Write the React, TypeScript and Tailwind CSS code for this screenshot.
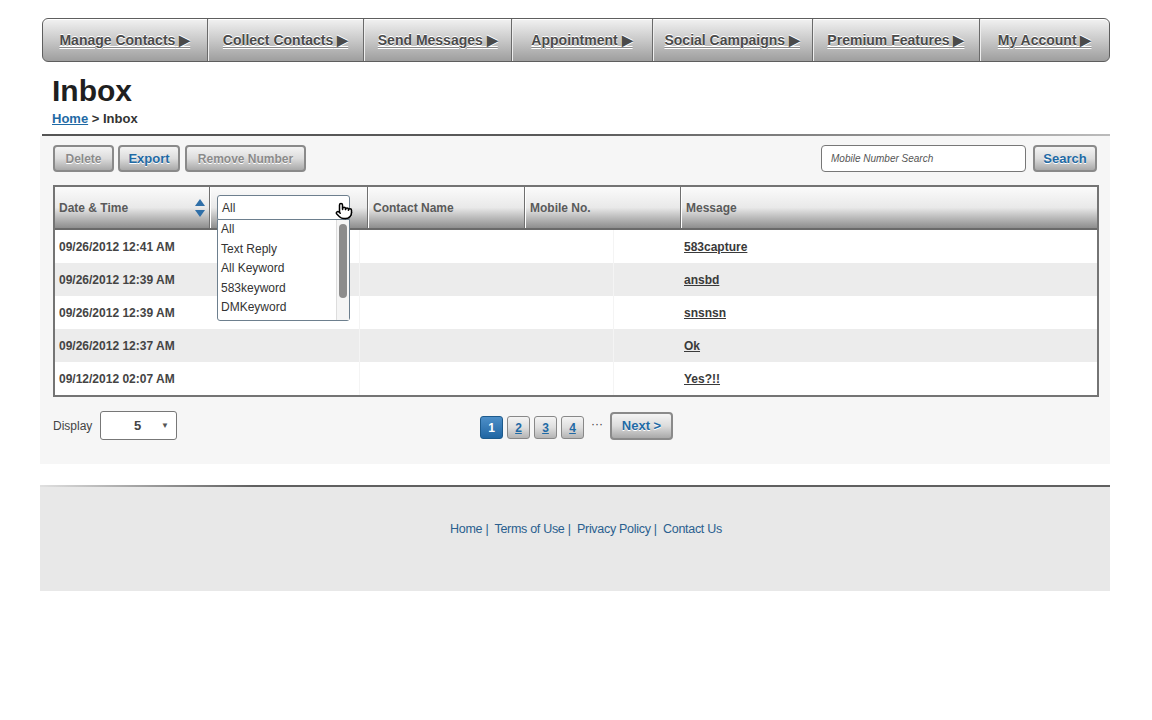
import { Pointer } from "lucide-react";

const navItems = [
  { label: "Manage Contacts", w: "w-[165px]" },
  { label: "Collect Contacts", w: "w-[157px]" },
  { label: "Send Messages", w: "w-[148px]" },
  { label: "Appointment", w: "w-[141px]" },
  { label: "Social Campaigns", w: "w-[160px]" },
  { label: "Premium Features", w: "w-[168px]" },
  { label: "My Account", w: "w-[129px]" },
];

const rows = [
  { date: "09/26/2012 12:41 AM", msg: "583capture" },
  { date: "09/26/2012 12:39 AM", msg: "ansbd" },
  { date: "09/26/2012 12:39 AM", msg: "snsnsn" },
  { date: "09/26/2012 12:37 AM", msg: "Ok" },
  { date: "09/12/2012 02:07 AM", msg: "Yes?!!" },
];

const options = ["All", "Text Reply", "All Keyword", "583keyword", "DMKeyword"];

// shared grey bevel button look
const btn =
  "h-[27px] rounded-[4px] border-2 border-[#8a8a8a] bg-gradient-to-b from-[#f4f4f4] via-[#dcdcdc] to-[#a9a9a9] text-[12px] font-bold [text-shadow:0_1px_0_#fff] flex items-center justify-center";

function HeaderCell({ label, w }: { label: string; w: string }) {
  return (
    <div
      className={`${w} h-full flex items-center px-[5px] border-r border-[#6f6f6f] shadow-[inset_1px_0_0_#fff] text-[12px] font-bold text-[#5a5a5a]`}
    >
      {label}
    </div>
  );
}

export default function App() {
  return (
    <div className="w-[1152px] h-[720px] bg-white font-['Liberation_Sans',Arial,sans-serif] text-[#444]">
      <div className="ml-[40px] w-[1070px] pt-[18px]">
        {/* Top navigation */}
        <div className="ml-[2px] w-[1068px] h-[44px] flex rounded-[6px] border border-[#5e5e5e] overflow-hidden bg-gradient-to-b from-[#f2f2f2] via-[#c9c9c9] to-[#9e9e9e] shadow-[inset_0_1px_0_#fff]">
          {navItems.map((n, i) => (
            <div
              key={n.label}
              className={`${n.w} h-full flex items-center justify-center text-[14px] font-bold text-[#4a4a4a] underline decoration-[#8a8a8a] underline-offset-2 [text-shadow:0_1px_0_#fff,0_-1px_0_#fff] ${i < navItems.length - 1 ? "border-r border-[#6a6a6a] shadow-[1px_0_0_#eee]" : ""}`}
            >
              {n.label} ▶
            </div>
          ))}
        </div>

        {/* Title */}
        <div className="pl-[12px] pt-[13px] h-[72px]">
          <div className="text-[30px] leading-[32px] font-bold text-[#1f1f1f]">Inbox</div>
          <div className="mt-[4px] text-[13px] leading-[16px] font-bold text-[#333]">
            <span className="text-[#1f6aa5] underline">Home</span> &gt; Inbox
          </div>
        </div>
        <div className="ml-[2px] h-[2px] bg-gradient-to-r from-[#555] via-[#5a5a5a] to-[#bbb]" />

        {/* Content panel */}
        <div className="bg-[#f6f6f6] h-[328px] pt-[9px] px-[13px]">
          <div className="flex items-center h-[27px]">
            <div className={`${btn} w-[61px] text-[#8a8a8a]`}>Delete</div>
            <div className={`${btn} w-[62px] ml-[4px] text-[#1f6aa5] text-[13px]`}>Export</div>
            <div className={`${btn} w-[121px] ml-[5px] text-[#8a8a8a]`}>Remove Number</div>
            <div className="ml-auto w-[205px] h-[27px] bg-white rounded-[4px] border border-[#777] flex items-center px-[9px] text-[10px] italic text-[#555]">
              Mobile Number Search
            </div>
            <div className={`${btn} w-[64px] ml-[7px] text-[#1f6aa5] text-[13px]`}>Search</div>
          </div>

          {/* Table */}
          <div className="mt-[13px] w-[1046px] border-2 border-[#747474] bg-white relative">
            <div className="h-[43px] flex border-b-2 border-[#6a6a6a] bg-gradient-to-b from-[#fbfbfb] via-[#e9e9e9] to-[#8e8e8e]">
              <div className="w-[155px] h-full flex items-center pl-[4px] pr-[4px] border-r border-[#6f6f6f] text-[12px] font-bold text-[#5a5a5a]">
                <span>Date &amp; Time</span>
                <div className="ml-auto flex flex-col gap-[4px] items-center">
                  <div className="w-0 h-0 border-l-[5px] border-r-[5px] border-b-[7px] border-l-transparent border-r-transparent border-b-[#2f6fa8]" />
                  <div className="w-0 h-0 border-l-[5px] border-r-[5px] border-t-[7px] border-l-transparent border-r-transparent border-t-[#2f6fa8]" />
                </div>
              </div>
              <div className="w-[158px] h-full flex items-center px-[7px] border-r border-[#6f6f6f] shadow-[inset_1px_0_0_#fff]">
                <div className="w-[133px] h-[26px] bg-white border border-[#6d7f8e] rounded-[3px] flex items-center px-[4px] text-[12px] text-[#333]">
                  All
                </div>
              </div>
              <HeaderCell label="Contact Name" w="w-[157px]" />
              <HeaderCell label="Mobile No." w="w-[156px]" />
              <div className="flex-1 h-full flex items-center px-[5px] shadow-[inset_1px_0_0_#fff] text-[12px] font-bold text-[#5a5a5a]">
                Message
              </div>
            </div>

            {rows.map((r, i) => (
              <div
                key={i}
                className={`h-[33px] flex items-center text-[12px] font-bold text-[#444] ${i % 2 === 1 ? "bg-[#ececec]" : "bg-white"}`}
              >
                <div className="w-[304px] pl-[4px]">{r.date}</div>
                <div className="w-[254px] h-full border-l border-[#f4f4f4]" />
                <div className="w-[68px] h-full border-l border-[#f4f4f4]" />
                <div className="pl-[3px] underline text-[#3a3a3a]">{r.msg}</div>
              </div>
            ))}

            {/* open filter list */}
            <div className="absolute left-[162px] top-[32px] w-[133px] h-[102px] bg-white border border-[#6d7f8e] rounded-b-[3px] flex">
              <div className="flex-1 pl-[3px] text-[12px] leading-[19.5px] text-[#333]">
                {options.map((o) => (
                  <div key={o}>{o}</div>
                ))}
              </div>
              <div className="w-[13px] border-l border-[#ddd] bg-[#f5f5f5] pt-[4px] flex justify-center">
                <div className="w-[8px] h-[74px] rounded-[4px] bg-[#8c8c8c]" />
              </div>
            </div>
            <Pointer
              className="absolute left-[280px] top-[15px] w-[18px] h-[18px] text-black fill-white"
              strokeWidth={2}
            />
          </div>

          {/* Footer controls */}
          <div className="mt-[15px] flex items-start">
            <div className="w-[47px] pt-[5px] text-[12px] text-[#444]">Display</div>
            <div className="w-[77px] h-[29px] -mt-[1px] bg-white border border-[#777] rounded-[3px] flex items-center pl-[33px] pr-[7px] text-[13px] font-bold text-[#444]">
              5
              <span className="ml-auto text-[8px] text-[#555]">▼</span>
            </div>
            <div className="ml-[303px] mt-[3px] flex items-center gap-[4px]">
              <div className="w-[23px] h-[23px] rounded-[3px] border border-[#1d5a8c] bg-gradient-to-b from-[#4d8fc8] to-[#1f66a3] text-white text-[12px] font-bold flex items-center justify-center">
                1
              </div>
              {["2", "3", "4"].map((p) => (
                <div
                  key={p}
                  className="w-[23px] h-[23px] rounded-[3px] border border-[#888] bg-gradient-to-b from-[#f4f4f4] via-[#dedede] to-[#b4b4b4] text-[#1f6aa5] underline text-[12px] font-bold flex items-center justify-center"
                >
                  {p}
                </div>
              ))}
              <span className="mx-[3px] -mt-[8px] text-[12px] text-[#444]">···</span>
              <div className="w-[63px] h-[28px] -mt-[3px] rounded-[4px] border-2 border-[#8a8a8a] bg-gradient-to-b from-[#f4f4f4] via-[#dcdcdc] to-[#a9a9a9] text-[#1f6aa5] text-[13px] font-bold flex items-center justify-center [text-shadow:0_1px_0_#fff]">
                Next &gt;
              </div>
            </div>
          </div>
        </div>

        {/* Page footer */}
        <div className="mt-[21px] h-[106px] bg-[#e8e8e8] relative flex items-center justify-center pb-[18px]">
          <div className="absolute top-0 left-0 right-0 h-[2px] bg-gradient-to-r from-[#e0e0e0] via-[#606060] via-20% to-[#606060]" />
          <div className="ml-[22px] text-[12.5px] text-[#2a5f8f] tracking-[-0.3px]">
            Home |&nbsp; Terms of Use |&nbsp; Privacy Policy |&nbsp; Contact Us
          </div>
        </div>
      </div>
    </div>
  );
}
